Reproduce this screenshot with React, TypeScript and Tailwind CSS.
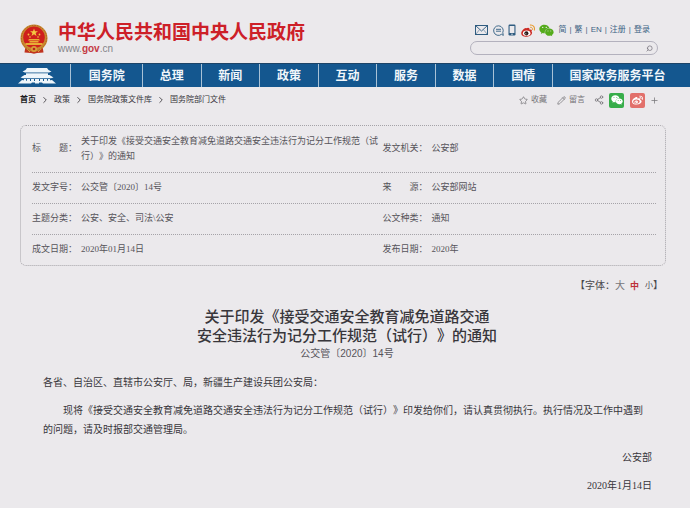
// src/pages/PolicyDocument.tsx

import { ChevronRight, Pencil, Plus, Search, Share2, Star } from "lucide-react";
import { FaWeibo, FaWeixin } from "react-icons/fa";

interface NavItem {
  label: string;
  className: string;
}

interface MetaRow {
  label: string;
  value: string;
  label2: string;
  value2: string;
}

const navItems: NavItem[] = [
  { label: "国务院", className: "flex-[71]" },
  { label: "总理", className: "flex-[58]" },
  { label: "新闻", className: "flex-[58]" },
  { label: "政策", className: "flex-[58]" },
  { label: "互动", className: "flex-[58]" },
  { label: "服务", className: "flex-[58]" },
  { label: "数据", className: "flex-[58]" },
  { label: "国情", className: "flex-[58]" },
  { label: "国家政务服务平台", className: "flex-[130] pr-2" },
];

const crumbs = ["首页", "政策", "国务院政策文件库", "国务院部门文件"];

const topLinks = ["简", "繁", "EN", "注册", "登录"];

const metaRows: MetaRow[] = [
  {
    label: "标\u3000\u3000题：",
    value: "关于印发《接受交通安全教育减免道路交通安全违法行为记分工作规范（试行）》的通知",
    label2: "发文机关：",
    value2: "公安部",
  },
  {
    label: "发文字号：",
    value: "公交管〔2020〕14号",
    label2: "来\u3000\u3000源：",
    value2: "公安部网站",
  },
  {
    label: "主题分类：",
    value: "公安、安全、司法\\公安",
    label2: "公文种类：",
    value2: "通知",
  },
  {
    label: "成文日期：",
    value: "2020年01月14日",
    label2: "发布日期：",
    value2: "2020年",
  },
];

const Emblem = () => (
  <svg viewBox="0 0 28 30" className="h-[30px] w-7 shrink-0" aria-hidden="true">
    <path d="M5.500 22 L22.500 22 L23.500 28.500 L17 29 L14 29.800 L11 29 L4.500 28.500 Z" fill="#c0331f" />
    <path d="M7 25 L10 28 M21 25 L18 28 M11 26 H17" stroke="#d9a03a" strokeWidth="1" />
    <circle cx="14" cy="14" r="13.500" fill="#c98a2f" />
    <circle cx="14" cy="14" r="12.600" fill="none" stroke="#a8541f" strokeWidth="0.800" strokeDasharray="1.500 1.200" />
    <circle cx="14" cy="13.300" r="10.800" fill="#cf1f1c" />
    <path d="M14 4.500 L15 7.300 L18 7.300 L15.600 9.100 L16.500 12 L14 10.200 L11.500 12 L12.400 9.100 L10 7.300 L13 7.300 Z" fill="#f4c842" />
    <circle cx="8.500" cy="10.500" r="0.900" fill="#f4c842" />
    <circle cx="19.500" cy="10.500" r="0.900" fill="#f4c842" />
    <circle cx="10" cy="13" r="0.800" fill="#f4c842" />
    <circle cx="18" cy="13" r="0.800" fill="#f4c842" />
    <path d="M9 15 H19 L20 16.500 H8 Z M9.500 17 H18.500 V18.500 H9.500 Z M5.500 19 H22.500 V21 H5.500 Z" fill="#e8ac35" />
    <circle cx="14" cy="25" r="3" fill="#d9a03a" />
    <circle cx="14" cy="25" r="1.300" fill="#b5261c" />
  </svg>
);

const GateIcon = () => (
  <svg viewBox="0 0 38 17" className="ml-1 h-[17px] w-[38px]" fill="#eef5fa" aria-hidden="true">
    <path d="M9 1 H29 L30.500 3 L33.500 4.500 L31 5.500 H7 L4.500 4.500 L7.500 3 Z" />
    <path d="M8 6.300 H30 V8 H8 Z" />
    <path d="M6.500 8 H31.500 L35.500 10.500 L33 11.200 H5 L2.500 10.500 Z" />
    <path d="M6 12 H8 V14 H6 Z M9 12 H12 V14 H9 Z M13 12 H16 V14 H13 Z M17 12 H21 V14 H17 Z M22 12 H25 V14 H22 Z M26 12 H29 V14 H26 Z M30 12 H32 V14 H30 Z" />
    <path d="M4 13 L10.500 14 H27.500 L34 13 L38 16.500 H25 L24 15.500 H21 V16.500 H17 V15.500 H14 L13 16.500 H0 Z" />
  </svg>
);

const MailIcon = () => (
  <svg viewBox="0 0 13 10" className="h-[10px] w-[13px]" fill="none" stroke="#2f5c80" aria-hidden="true">
    <rect x="0.500" y="0.500" width="12" height="9" />
    <path d="M0.800 0.800 L6.500 6 L12.200 0.800" strokeWidth="0.900" />
    <path d="M0.800 9.200 L4.600 4.600 M12.200 9.200 L8.400 4.600" strokeWidth="0.500" />
  </svg>
);

const ChatIcon = () => (
  <svg viewBox="0 0 11 11" className="h-[11px] w-[11px]" fill="none" stroke="#2f5c80" aria-hidden="true">
    <path d="M8.500 9.300 A4.800 4.800 0 1 1 9.800 7.600 L10.300 10.400 Z" strokeWidth="0.900" />
    <path d="M3 4.300 H8 M3 6.200 H8" strokeWidth="0.900" />
  </svg>
);

const PhoneIcon = () => (
  <svg viewBox="0 0 8 12" className="h-3 w-2" aria-hidden="true">
    <rect x="0.500" y="0.500" width="7" height="11" rx="1.200" fill="#2f5c80" />
    <rect x="1.600" y="2" width="4.800" height="7" fill="#ebe9ec" />
    <circle cx="4" cy="10.200" r="0.700" fill="#ebe9ec" />
  </svg>
);

const WeiboColor = () => (
  <svg viewBox="0 0 26 24" className="h-[13px] w-[14px]" aria-hidden="true">
    <path d="M10 8 C13 5.500 17 7 15.500 10.500 C19 9.500 21.500 11.500 19.500 14 C23 17 18 23.500 10.500 23.500 C4 23.500 0 20.500 0.500 16.500 C1 12 8 5.500 10 8 Z" fill="#cc2a24" />
    <ellipse cx="10.500" cy="17" rx="7" ry="4.800" fill="#fff" />
    <circle cx="10" cy="17.300" r="3.800" fill="#2a1716" />
    <circle cx="9" cy="18" r="1" fill="#fff" />
    <path d="M17 6 C20.500 5.500 22 8 21 11" fill="none" stroke="#e79a2f" strokeWidth="1.800" />
    <path d="M16.500 2 C22.500 0.800 26.500 6 24.500 12" fill="none" stroke="#e79a2f" strokeWidth="2" />
  </svg>
);

const Header = () => (
  <header className="flex items-start justify-between pt-6 pr-8 pl-5">
    <a href="#" className="flex gap-[10px]">
      <Emblem />
      <span className="-mt-[3px] flex flex-col">
        <span className="text-[19px] leading-[23px] font-bold whitespace-nowrap text-[#cd2028]">
          中华人民共和国中央人民政府
        </span>
        <span className="text-[10px] leading-[9px] text-[#85858a]">
          www.<b className="text-[#c43a44]">gov</b>.cn
        </span>
      </span>
    </a>
    <div className="w-[188px]">
      <div className="flex h-3 items-center justify-between pr-2 pl-[5px] text-[8px] text-[#3d6384]">
        <MailIcon />
        <ChatIcon />
        <PhoneIcon />
        <WeiboColor />
        <FaWeixin className="h-[15px] w-[15px] text-[#55ab1c]" />
        <div className="flex gap-[3px]">
          {topLinks.map((link, i) => (
            <span key={link} className="flex gap-[3px] whitespace-nowrap">
              {i > 0 && <span>|</span>}
              <a href="#">{link}</a>
            </span>
          ))}
        </div>
      </div>
      <form className="mt-[5px] flex h-[14px] items-center rounded-full border border-[#b3b1bd] pr-1 pl-2">
        <input type="search" aria-label="搜索" className="h-3 min-w-0 flex-1 bg-transparent text-[8px] outline-none" />
        <button type="button" aria-label="提交搜索">
          <Search className="h-[7px] w-[7px] -scale-x-100 text-[#77737c]" strokeWidth={2.5} />
        </button>
      </form>
    </div>
  </header>
);

const Navigation = () => (
  <nav className="mt-2 flex h-6 border-t border-[#1c4468] bg-[#14578f] text-[12px] font-bold text-[#f1f6fa]">
    <a href="#" aria-label="首页" className="flex flex-[71] items-center justify-center">
      <GateIcon />
    </a>
    {navItems.map((item) => (
      <a
        key={item.label}
        href="#"
        className={`flex items-center justify-center border-l border-[#a9c2d6] whitespace-nowrap ${item.className}`}
      >
        {item.label}
      </a>
    ))}
  </nav>
);

const Toolbar = () => (
  <div className="flex h-[26px] items-center justify-between pr-[31px] pl-5 text-[8px] text-[#38363b]">
    <div className="flex items-center">
      {crumbs.map((crumb, i) => (
        <span key={crumb} className="flex items-center">
          {i > 0 && <ChevronRight className="mx-1 h-[10px] w-[10px]" strokeWidth={2} />}
          <a href="#" className={i === 0 ? "font-bold text-[#1c1b1e]" : ""}>
            {crumb}
          </a>
        </span>
      ))}
    </div>
    <div className="flex items-center text-[#77757a]">
      <button type="button" className="flex items-center gap-[3px]">
        <Star className="h-[9px] w-[9px]" strokeWidth={2} />
        收藏
      </button>
      <button type="button" className="ml-[10px] flex items-center gap-[3px]">
        <Pencil className="h-[9px] w-[9px]" strokeWidth={2} />
        留言
      </button>
      <button type="button" aria-label="分享" className="ml-[9px]">
        <Share2 className="h-[10px] w-[10px]" strokeWidth={2} />
      </button>
      <a href="#" aria-label="微信" className="ml-[5px] flex h-[15px] w-[15px] items-center justify-center rounded-xs bg-[#37ad4a] text-white">
        <FaWeixin className="h-3 w-3" />
      </a>
      <a href="#" aria-label="微博" className="ml-[6px] flex h-[15px] w-[15px] items-center justify-center rounded-xs bg-[#e2706b] text-white">
        <FaWeibo className="h-[11px] w-[11px]" />
      </a>
      <button type="button" aria-label="更多" className="ml-[5px]">
        <Plus className="h-[9px] w-[9px]" strokeWidth={2} />
      </button>
    </div>
  </div>
);

const MetaTable = () => (
  <div className="mt-3 mr-6 ml-5 rounded-md border border-dotted border-[#a5a3a8] pr-[9px] pl-[11px]">
    <table className="w-full table-fixed border-collapse font-['Liberation_Serif','Noto_Sans_CJK_SC',serif] text-[9px] leading-[15px] text-[#56545a]">
      <colgroup>
        <col className="w-[49px]" />
        <col />
        <col className="w-[49px]" />
        <col className="w-[36%]" />
      </colgroup>
      <tbody>
        {metaRows.map((row, i) => (
          <tr
            key={row.label}
            className={`border-dotted border-[#a5a3a8] ${i === 0 ? "h-[46px]" : "h-[31px]"} ${
              i < metaRows.length - 1 ? "border-b" : ""
            }`}
          >
            <th scope="row" className="text-left font-normal whitespace-nowrap">
              {row.label}
            </th>
            <td>{row.value}</td>
            <th scope="row" className="text-left font-normal whitespace-nowrap">
              {row.label2}
            </th>
            <td>{row.value2}</td>
          </tr>
        ))}
      </tbody>
    </table>
  </div>
);

const App = () => {
  return (
    <div className="min-h-screen bg-[#ebe9ec] font-['Liberation_Sans','Noto_Sans_CJK_SC',sans-serif] [text-spacing-trim:space-all]">
      <Header />
      <Navigation />
      <Toolbar />
      <main>
        <MetaTable />

        {/* Font size switcher */}
        <div className="mt-3 flex items-center justify-end pr-[27px] text-[10px] leading-4 text-[#4a484d]">
          <span>【字体：</span>
          <button type="button" className="mr-[5px] text-[#77757a]">大</button>
          <button type="button" className="mr-[6px] text-[9px] font-bold text-[#bd3038]">中</button>
          <button type="button" className="text-[8px]">小</button>
          <span>】</span>
        </div>

        <article className="pt-[13px] text-[#38363b]">
          <div className="pl-1 text-center">
            <h1 className="text-[15px] leading-[19px] font-medium">
              关于印发《接受交通安全教育减免道路交通
              <br />
              安全违法行为记分工作规范（试行）》的通知
            </h1>
            <p className="mt-px text-[10px] leading-4 text-[#55535a]">公交管〔2020〕14号</p>
          </div>
          <div className="pr-[38px] pl-[43px] font-['Liberation_Serif','Noto_Sans_CJK_SC',serif] text-[10px] leading-[19px]">
            <p className="mt-[11px]">各省、自治区、直辖市公安厅、局，新疆生产建设兵团公安局：</p>
            <p className="mt-[9px] indent-[20px]">
              现将《接受交通安全教育减免道路交通安全违法行为记分工作规范（试行）》印发给你们，请认真贯彻执行。执行情况及工作中遇到
              <br />
              的问题，请及时报部交通管理局。
            </p>
            <p className="mt-[9px] text-right">公安部</p>
            <p className="mt-[9px] text-right">2020年1月14日</p>
          </div>
        </article>
      </main>
    </div>
  );
};

export default App;
